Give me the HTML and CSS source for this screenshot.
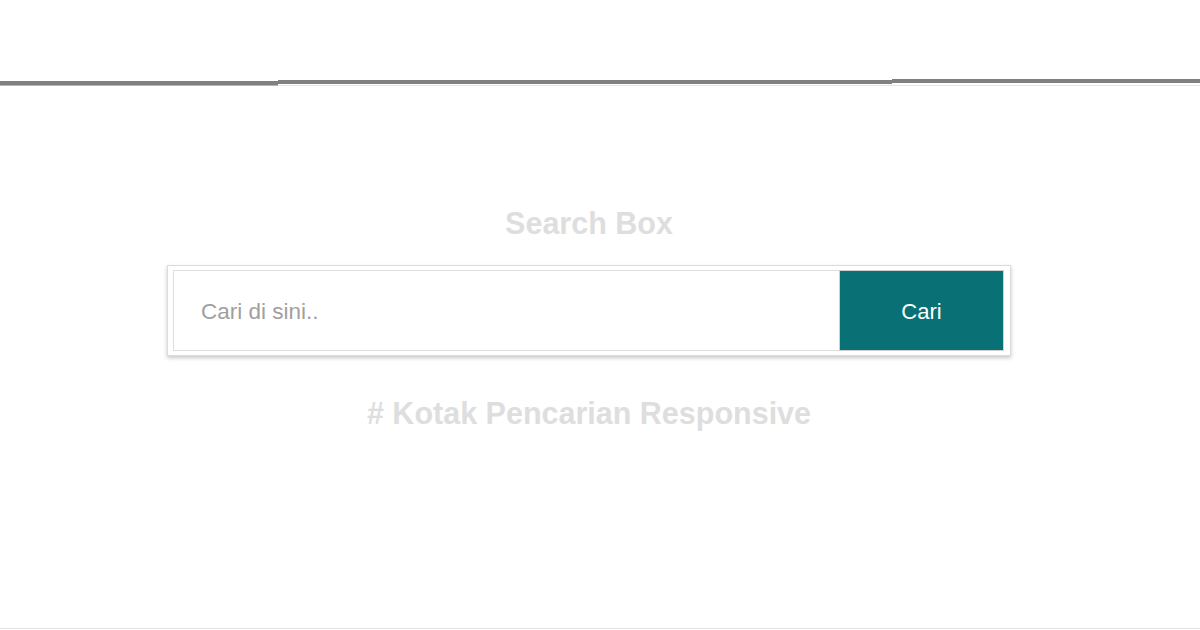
FILE: index.html
```html
<!DOCTYPE html>
<html lang="id">
<head>
<meta charset="utf-8">
<title>Search Box</title>
<link rel="stylesheet" href="styles.css">
</head>
<body>
<div class="page">
  <div class="rule">
    <div class="seg seg1"></div>
    <div class="seg seg2"></div>
    <div class="seg seg3"></div>
  </div>
  <main class="main">
    <h2 class="title">Search Box</h2>
    <form class="search">
      <input class="field" type="text" placeholder="Cari di sini..">
      <button class="btn" type="button">Cari</button>
    </form>
    <h2 class="title sub"># Kotak Pencarian Responsive</h2>
  </main>
  <div class="foot"></div>
</div>
</body>
</html>
```

FILE: styles.css
```css
html, body {
  margin: 0;
  padding: 0;
  background: #fff;
}
.page {
  width: 1200px;
  height: 630px;
  display: flex;
  flex-direction: column;
  font-family: "Liberation Sans", Arial, sans-serif;
  overflow: hidden;
}
.rule {
  display: flex;
  height: 87px;
  align-items: flex-start;
}
.seg {
  box-sizing: border-box;
  border-top: 4px solid #808080;
}
.seg1 {
  width: 278px;
  margin-top: 81px;
  height: 5px;
  border-bottom: 1px solid #b4b4b4;
}
.seg2 {
  width: 614px;
  margin-top: 80px;
  height: 6px;
  border-bottom: 1px solid #e4e4e4;
}
.seg3 {
  flex: 1;
  margin-top: 79px;
  height: 7px;
  border-bottom: 1px solid #e4e4e4;
}
.main {
  flex: 1;
  width: 1178px;
  display: flex;
  flex-direction: column;
  align-items: center;
  padding-top: 119px;
  box-sizing: border-box;
}
.title {
  margin: 0;
  font-size: 30.5px;
  line-height: 34px;
  font-weight: bold;
  color: #dedede;
}
.search {
  margin: 25px 0 0;
  width: 844px;
  box-sizing: border-box;
  display: flex;
  border: 1px solid #dcdcdc;
  padding: 4px 6px 4px 5px;
  background: #fff;
  box-shadow: 0 2px 4px rgba(0,0,0,0.22);
}
.field {
  width: 666px;
  height: 81px;
  box-sizing: border-box;
  border: 1px solid #dedede;
  border-right: none;
  padding: 2px 0 0 27px;
  margin: 0;
  font-family: "Liberation Sans", Arial, sans-serif;
  font-size: 22.5px;
  color: #555;
  outline: none;
}
.field::placeholder {
  color: #a0a0a0;
}
.btn {
  flex: 1;
  height: 81px;
  margin: 0;
  padding: 2px 0 0;
  box-sizing: border-box;
  border: 1px solid #cfcfcf;
  background: #097075;
  color: #fff;
  font-family: "Liberation Sans", Arial, sans-serif;
  font-size: 22px;
  cursor: pointer;
}
.sub {
  margin-top: 40px;
}
.foot {
  height: 2px;
  border-top: 1px solid #e2e2e2;
  box-sizing: border-box;
}
```
